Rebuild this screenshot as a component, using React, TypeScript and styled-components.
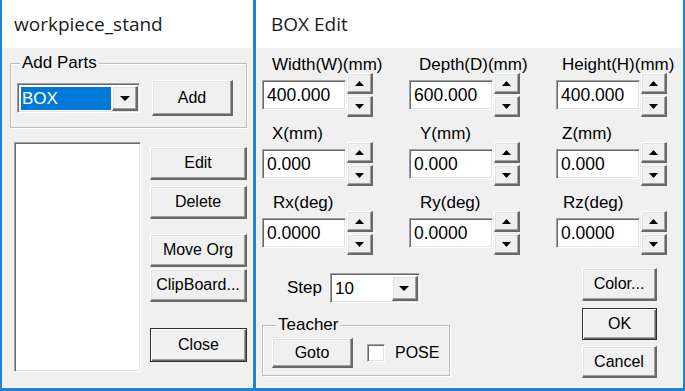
import React from 'react';
import styled, { createGlobalStyle, css } from 'styled-components';

const GlobalStyle = createGlobalStyle`
  html, body {
    margin: 0;
    padding: 0;
    background: #f0f0f0;
  }
  body {
    width: 685px;
    height: 391px;
    overflow: hidden;
    font-family: "Liberation Sans", Arial, sans-serif;
    color: #000;
  }
  * {
    box-sizing: border-box;
  }
`;

// classic 3D edges
const raised = css`
  background: #f0f0f0;
  border-style: solid;
  border-width: 1px 2px 2px 1px;
  border-color: #fff #696969 #696969 #fff;
  box-shadow: inset -1px -1px 0 #a0a0a0, inset 1px 1px 0 #e3e3e3;
`;

const sunken = css`
  background: #fff;
  border-style: solid;
  border-width: 1px;
  border-color: #a0a0a0 #fff #fff #a0a0a0;
  box-shadow: inset 1px 1px 0 #696969, inset -1px -1px 0 #e3e3e3;
`;

const Desktop = styled.div`
  display: flex;
  width: 685px;
  height: 391px;
`;

const Window = styled.div<{ $width: number; $rightEdge: number }>`
  display: flex;
  flex-direction: column;
  width: ${p => p.$width}px;
  height: 100%;
  border-style: solid;
  border-color: #1c84d8;
  border-width: 0 ${p => p.$rightEdge}px 3px 2px;
  background: #f0f0f0;
  box-shadow: inset -1px -1px 0 #fcfcfc;
`;

const TitleBar = styled.div<{ $indent: number }>`
  height: 48px;
  flex-shrink: 0;
  background: #fff;
  padding: 11px 0 0 ${p => p.$indent}px;
  font-family: "Open Sans", "Noto Sans", sans-serif;
  font-size: 19px;
  line-height: 26px;
  color: #1b1b1b;
`;

const LeftBody = styled.div`
  flex: 1;
  padding: 5px 6px 0 8px;
`;

const RightBody = styled.div`
  flex: 1;
  padding: 9px 0 0 6px;
`;

const Group = styled.fieldset<{ $width?: number }>`
  margin: 0;
  padding: 0;
  min-width: 0;
  ${p => p.$width && `width: ${p.$width}px;`}
  border: 1px solid #bdbdbd;
  box-shadow: inset 1px 1px 0 #fff, 1px 1px 0 #fff;
`;

const GroupLabel = styled.legend<{ $indent: number }>`
  margin-left: ${p => p.$indent}px;
  padding: 0 2px;
  background: #f0f0f0;
  font-size: 17px;
  line-height: 20px;
`;

const PartsRow = styled.div`
  display: flex;
  align-items: center;
  padding: 7px 0 11px 6px;
`;

const Button = styled.button<{ $w: number; $h: number; $gap?: number; $isDefault?: boolean }>`
  ${raised}
  width: ${p => p.$w}px;
  height: ${p => p.$h}px;
  margin: ${p => p.$gap ?? 0}px 0 0 0;
  padding: 0;
  font-family: "Liberation Sans", Arial, sans-serif;
  font-size: 16px;
  color: #000;
  flex-shrink: 0;
  ${p =>
    p.$isDefault &&
    css`
      border: 1px solid #2e2e2e;
      box-shadow: inset 1px 1px 0 #fff, inset -1px -1px 0 #696969, inset -2px -2px 0 #a0a0a0;
    `}
`;

const Combo = styled.div<{ $w: number }>`
  ${sunken}
  display: flex;
  width: ${p => p.$w}px;
  height: 30px;
  padding: 2px 1px 1px 2px;
  flex-shrink: 0;
`;

const ComboText = styled.div<{ $selected?: boolean }>`
  flex: 1;
  margin: 1px;
  padding-left: 1px;
  font-size: 17px;
  line-height: 23px;
  background: ${p => (p.$selected ? '#0078d7' : '#fff')};
  color: ${p => (p.$selected ? '#fff' : '#000')};
`;

const DropButton = styled.div`
  ${raised}
  width: 26px;
  display: flex;
  align-items: center;
  justify-content: center;
`;

const ListRow = styled.div`
  display: flex;
  margin-top: 14px;
`;

const ListBox = styled.div`
  ${sunken}
  width: 128px;
  height: 230px;
  margin-left: 4px;
`;

const ButtonColumn = styled.div`
  display: flex;
  flex-direction: column;
  margin: 5px 0 0 9px;
`;

const FieldGrid = styled.div`
  display: grid;
  grid-template-columns: repeat(3, 111px);
  column-gap: 36px;
  row-gap: 9px;
`;

const Field = styled.div`
  display: flex;
  flex-direction: column;
`;

const FieldLabel = styled.div<{ $indent: number }>`
  padding-left: ${p => p.$indent}px;
  font-size: 17px;
  line-height: 16px;
  white-space: nowrap;
`;

const SpinRow = styled.div`
  display: flex;
  align-items: center;
  gap: 1px;
  height: 44px;
`;

const EditBox = styled.div`
  ${sunken}
  width: 84px;
  height: 30px;
  padding-left: 4px;
  font-size: 17.5px;
  line-height: 28px;
`;

const Spinner = styled.div`
  display: flex;
  flex-direction: column;
  gap: 2px;
`;

const SpinButton = styled.div`
  ${raised}
  width: 26px;
  height: 21px;
  display: flex;
  align-items: center;
  justify-content: center;
`;

const BottomArea = styled.div`
  display: flex;
  justify-content: space-between;
  margin-top: 13px;
  padding-right: 26px;
`;

const LeftColumn = styled.div`
  display: flex;
  flex-direction: column;
`;

const StepRow = styled.div`
  display: flex;
  align-items: center;
  gap: 8px;
  margin-top: 5px;
  padding-left: 25px;
`;

const Text = styled.span<{ $size?: number }>`
  font-size: ${p => p.$size ?? 17}px;
`;

const TeacherGroup = styled(Group)`
  margin-top: 12px;
`;

const TeacherRow = styled.div`
  display: flex;
  align-items: center;
  padding: 3px 0 7px 9px;
`;

const CheckBox = styled.div`
  ${sunken}
  width: 18px;
  height: 18px;
  margin: 0 10px 0 14px;
`;

const ActionColumn = styled.div`
  display: flex;
  flex-direction: column;
`;

const Arrow: React.FC<{ dir: 'up' | 'down'; size?: number }> = ({ dir, size = 9 }) => {
  const h = Math.ceil(size / 2);
  const pts = dir === 'up' ? `0,${h} ${size / 2},0 ${size},${h}` : `0,0 ${size / 2},${h} ${size},0`;
  return (
    <svg width={size} height={h} viewBox={`0 0 ${size} ${h}`}>
      <polygon points={pts} fill="#000" />
    </svg>
  );
};

const fields = [
  { label: 'Width(W)(mm)', value: '400.000', indent: 10 },
  { label: 'Depth(D)(mm)', value: '600.000', indent: 10 },
  { label: 'Height(H)(mm)', value: '400.000', indent: 6 },
  { label: 'X(mm)', value: '0.000', indent: 10 },
  { label: 'Y(mm)', value: '0.000', indent: 11 },
  { label: 'Z(mm)', value: '0.000', indent: 6 },
  { label: 'Rx(deg)', value: '0.0000', indent: 11 },
  { label: 'Ry(deg)', value: '0.0000', indent: 11 },
  { label: 'Rz(deg)', value: '0.0000', indent: 7 },
];

const App: React.FC = () => {
  return (
    <>
      <GlobalStyle />
      <Desktop>
        <Window $width={254} $rightEdge={1}>
          <TitleBar $indent={12}>workpiece_stand</TitleBar>
          <LeftBody>
            <Group>
              <GroupLabel $indent={9}>Add Parts</GroupLabel>
              <PartsRow>
                <Combo $w={123}>
                  <ComboText $selected>BOX</ComboText>
                  <DropButton>
                    <Arrow dir="down" size={10} />
                  </DropButton>
                </Combo>
                <Button $w={81} $h={36} style={{ marginLeft: 12 }}>
                  Add
                </Button>
              </PartsRow>
            </Group>
            <ListRow>
              <ListBox />
              <ButtonColumn>
                <Button $w={97} $h={33}>Edit</Button>
                <Button $w={97} $h={33} $gap={6}>Delete</Button>
                <Button $w={97} $h={33} $gap={15}>Move Org</Button>
                <Button $w={97} $h={33} $gap={2}>ClipBoard...</Button>
                <Button $w={97} $h={34} $gap={26} $isDefault>Close</Button>
              </ButtonColumn>
            </ListRow>
          </LeftBody>
        </Window>

        <Window $width={431} $rightEdge={2}>
          <TitleBar $indent={15}>BOX Edit</TitleBar>
          <RightBody>
            <FieldGrid>
              {fields.map(f => (
                <Field key={f.label}>
                  <FieldLabel $indent={f.indent}>{f.label}</FieldLabel>
                  <SpinRow>
                    <EditBox>{f.value}</EditBox>
                    <Spinner>
                      <SpinButton>
                        <Arrow dir="up" />
                      </SpinButton>
                      <SpinButton>
                        <Arrow dir="down" />
                      </SpinButton>
                    </Spinner>
                  </SpinRow>
                </Field>
              ))}
            </FieldGrid>
            <BottomArea>
              <LeftColumn>
                <StepRow>
                  <Text>Step</Text>
                  <Combo $w={90}>
                    <ComboText>10</ComboText>
                    <DropButton>
                      <Arrow dir="down" size={10} />
                    </DropButton>
                  </Combo>
                </StepRow>
                <TeacherGroup $width={188}>
                  <GroupLabel $indent={13}>Teacher</GroupLabel>
                  <TeacherRow>
                    <Button $w={81} $h={30}>Goto</Button>
                    <CheckBox />
                    <Text $size={16}>POSE</Text>
                  </TeacherRow>
                </TeacherGroup>
              </LeftColumn>
              <ActionColumn>
                <Button $w={75} $h={33}>Color...</Button>
                <Button $w={75} $h={32} $gap={7} $isDefault>OK</Button>
                <Button $w={75} $h={32} $gap={6}>Cancel</Button>
              </ActionColumn>
            </BottomArea>
          </RightBody>
        </Window>
      </Desktop>
    </>
  );
};

export default App;
